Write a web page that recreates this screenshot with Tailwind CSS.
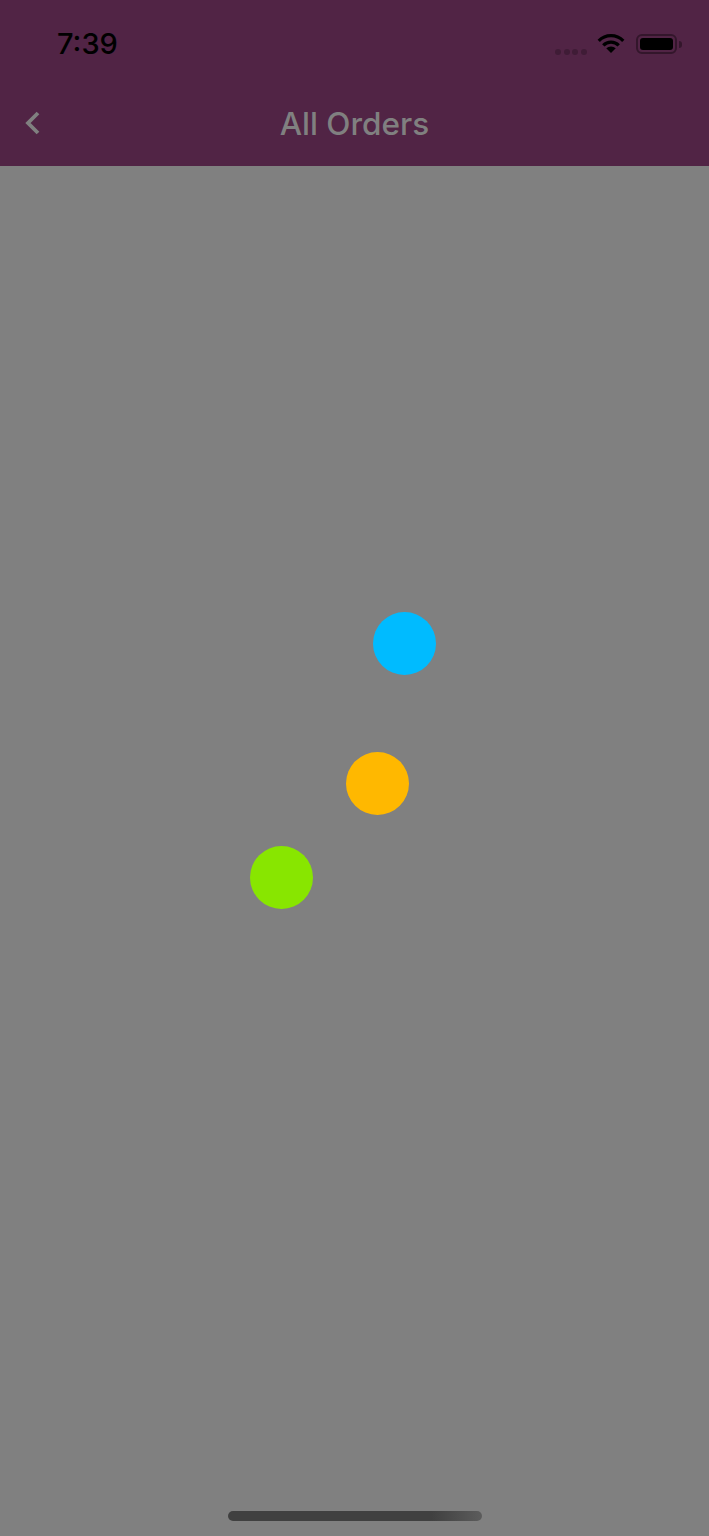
<!DOCTYPE html>
<html lang="en">
<head>
    <meta charset="UTF-8">
    <meta name="viewport" content="width=device-width, initial-scale=1.0">
    <title>All Orders</title>
    <script src="https://cdn.jsdelivr.net/npm/@tailwindcss/browser@4"></script>
</head>
<body class="bg-[#808080] font-['Inter','Liberation_Sans',sans-serif]">
    <div class="relative w-[709px] h-[1536px] overflow-hidden flex flex-col">
        <!-- Header -->
        <header class="bg-[#512445] h-[166px] shrink-0 flex flex-col">
            <!-- Status bar -->
            <div class="h-[82px] flex items-start justify-between pl-[57px] pr-[27px]">
                <span class="mt-[26px] text-[29px] leading-[36px] font-medium text-black">7:39</span>
                <div class="flex items-center mt-[33px]">
                    <div class="flex gap-[2.6px] mt-[16px] mr-[10px]">
                        <span class="w-[6px] h-[6px] rounded-full bg-[#3f1c36]"></span>
                        <span class="w-[6px] h-[6px] rounded-full bg-[#3f1c36]"></span>
                        <span class="w-[6px] h-[6px] rounded-full bg-[#3f1c36]"></span>
                        <span class="w-[6px] h-[6px] rounded-full bg-[#3f1c36]"></span>
                    </div>
                    <svg width="28" height="20" viewBox="0 0 30 22" class="mr-[11px]">
                        <path d="M1.5 7.5 A19 19 0 0 1 28.5 7.5" fill="none" stroke="#000" stroke-width="3.6"/>
                        <path d="M6.5 12.5 A12 12 0 0 1 23.5 12.5" fill="none" stroke="#000" stroke-width="3.6"/>
                        <path d="M15 21 L9.8 15.8 A7.4 7.4 0 0 1 20.2 15.8 Z" fill="#000"/>
                    </svg>
                    <div class="w-[41px] h-[20px] rounded-[6px] border-2 border-[#33162b] p-[2px]">
                        <div class="w-full h-full rounded-[3px] bg-black"></div>
                    </div>
                    <span class="w-[3px] h-[7px] ml-[2px] rounded-r-full bg-[#33162b]"></span>
                </div>
            </div>
            <!-- Nav -->
            <div class="relative flex-1 flex items-center justify-center">
                <svg width="18" height="26" viewBox="0 0 18 26" class="absolute left-[23px] top-[28px]">
                    <path d="M15 3 L5 13 L15 23" fill="none" stroke="#808080" stroke-width="3.8"/>
                </svg>
                <h1 class="text-[31.5px] leading-[36px] font-medium text-[#808080]">All Orders</h1>
            </div>
        </header>

        <!-- Loading dots -->
        <span class="absolute left-[373px] top-[612px] w-[63px] h-[63px] rounded-full bg-[#00bbff]"></span>
        <span class="absolute left-[346px] top-[752px] w-[63px] h-[63px] rounded-full bg-[#ffb800]"></span>
        <span class="absolute left-[250px] top-[846px] w-[63px] h-[63px] rounded-full bg-[#88e600]"></span>

        <!-- Home indicator -->
        <div class="absolute left-[228px] bottom-[15px] w-[254px] h-[10px] rounded-full bg-linear-to-r from-[#404040] from-80% to-[#5c5c5c]"></div>
    </div>
</body>
</html>
